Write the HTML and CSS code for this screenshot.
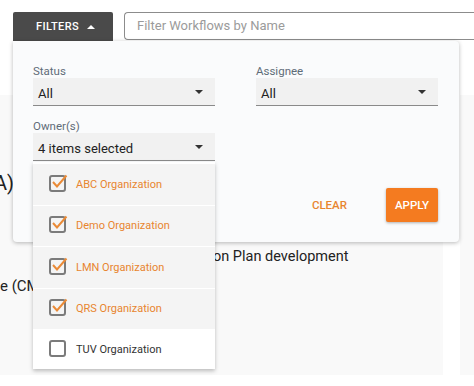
FILE: index.html
```html
<!DOCTYPE html>
<html>
<head>
<meta charset="utf-8">
<link rel="stylesheet" href="styles.css">
</head>
<body>
<div class="topbar">
  <button class="filters-btn">FILTERS<span class="up"></span></button>
  <div class="search">Filter Workflows by Name</div>
</div>

<div class="page">
  <div class="card main-card">
    <p class="bg-line big">A)</p>
    <p class="bg-line plan">on Plan development</p>
    <p class="bg-line cm">e (CM</p>
  </div>
  <div class="card side-card"></div>
</div>

<div class="filter-panel">
  <div class="grid">
    <div class="field">
      <div class="label">Status</div>
      <div class="select">All<span class="caret"></span></div>
    </div>
    <div class="field">
      <div class="label">Assignee</div>
      <div class="select">All<span class="caret"></span></div>
    </div>
    <div class="field owner">
      <div class="label">Owner(s)</div>
      <div class="select">4 items selected<span class="caret"></span></div>
    </div>
  </div>
  <div class="actions">
    <span class="clear">CLEAR</span>
    <span class="apply">APPLY</span>
  </div>
</div>

<ul class="owner-list">
  <li class="checked"><svg class="cb" viewBox="0 0 20 20"><rect x="2" y="3" width="15" height="15" rx="2" fill="none" stroke="#7b7b7b" stroke-width="2"/><polyline points="5,9 9,13.5 18.5,2.5" fill="none" stroke="#ea8a36" stroke-width="2"/></svg>ABC Organization</li>
  <li class="checked"><svg class="cb" viewBox="0 0 20 20"><rect x="2" y="3" width="15" height="15" rx="2" fill="none" stroke="#7b7b7b" stroke-width="2"/><polyline points="5,9 9,13.5 18.5,2.5" fill="none" stroke="#ea8a36" stroke-width="2"/></svg>Demo Organization</li>
  <li class="checked"><svg class="cb" viewBox="0 0 20 20"><rect x="2" y="3" width="15" height="15" rx="2" fill="none" stroke="#7b7b7b" stroke-width="2"/><polyline points="5,9 9,13.5 18.5,2.5" fill="none" stroke="#ea8a36" stroke-width="2"/></svg>LMN Organization</li>
  <li class="checked"><svg class="cb" viewBox="0 0 20 20"><rect x="2" y="3" width="15" height="15" rx="2" fill="none" stroke="#7b7b7b" stroke-width="2"/><polyline points="5,9 9,13.5 18.5,2.5" fill="none" stroke="#ea8a36" stroke-width="2"/></svg>QRS Organization</li>
  <li><svg class="cb" viewBox="0 0 20 20"><rect x="2" y="3" width="15" height="15" rx="2" fill="none" stroke="#7b7b7b" stroke-width="2"/></svg>TUV Organization</li>
</ul>
</body>
</html>
```

FILE: styles.css
```css
* { box-sizing: border-box; }
html, body {
  margin: 0;
  padding: 0;
}
body {
  width: 474px;
  height: 386px;
  overflow: hidden;
  background: #ffffff;
  font-family: Roboto, "Liberation Sans", Arial, sans-serif;
  color: #222;
  position: relative;
}

.topbar {
  display: flex;
  gap: 11px;
  padding: 12px 0 0 13px;
  height: 41px;
}
.filters-btn {
  width: 100px;
  height: 29px;
  border: none;
  border-radius: 2px 2px 0 0;
  background: #4a4a4a;
  color: #ffffff;
  font-family: Roboto, sans-serif;
  font-weight: 500;
  font-size: 11px;
  letter-spacing: 0.4px;
  padding: 0 0 0 5px;
  display: flex;
  align-items: center;
  justify-content: center;
}
.filters-btn .up {
  display: inline-block;
  width: 0;
  height: 0;
  margin-left: 8px;
  border-left: 4px solid transparent;
  border-right: 4px solid transparent;
  border-bottom: 4px solid #ffffff;
}
.search {
  flex: 1;
  height: 28px;
  border: 1px solid #8c8c8c;
  border-right: none;
  border-radius: 4px 0 0 4px;
  padding-left: 12px;
  font-size: 13px;
  line-height: 26px;
  color: #9b9b9b;
}

.page {
  display: flex;
  gap: 17px;
  margin-top: 54px;
}
.card {
  background: #f9f9f9;
  height: 280px;
}
.main-card {
  width: 443px;
  padding-top: 76px;
}
.side-card {
  flex: 1;
}
.bg-line {
  margin: 0;
  color: #222;
  white-space: nowrap;
}
.big {
  font-size: 20px;
  line-height: 24px;
  margin-left: -6px;
}
.plan {
  font-size: 14.5px;
  line-height: 18px;
  margin-top: 53px;
  padding-left: 213px;
}
.cm {
  font-size: 15px;
  line-height: 18px;
  margin-top: 11px;
}

.filter-panel {
  position: absolute;
  left: 13px;
  top: 41px;
  width: 446px;
  height: 201px;
  background: #fafbfc;
  border-radius: 0 4px 4px 4px;
  box-shadow: 0 1px 4px rgba(0, 0, 0, 0.28);
  padding: 23px 21px 0 20px;
}
.grid {
  display: grid;
  grid-template-columns: 182px 182px;
  column-gap: 41px;
  row-gap: 13px;
}
.label {
  font-size: 11.5px;
  line-height: 14px;
  color: #5f6c78;
}
.select {
  position: relative;
  height: 28px;
  background: #f1f1f1;
  border-bottom: 1px solid #8a8a8a;
  padding-left: 5px;
  font-size: 13px;
  line-height: 31px;
  color: #222;
}
.caret {
  position: absolute;
  right: 12px;
  top: 12px;
  width: 0;
  height: 0;
  border-left: 4px solid transparent;
  border-right: 4px solid transparent;
  border-top: 4px solid #333;
}
.actions {
  display: flex;
  justify-content: flex-end;
  align-items: center;
  gap: 39px;
  margin-top: 27px;
}
.clear {
  font-size: 11.5px;
  font-weight: 500;
  color: #e8852f;
}
.apply {
  width: 52px;
  height: 34px;
  background: #f47b20;
  color: #fff;
  font-size: 11.5px;
  font-weight: 500;
  border-radius: 2px;
  display: flex;
  align-items: center;
  justify-content: center;
  box-shadow: 0 1px 3px rgba(0, 0, 0, 0.3);
}

.owner-list {
  position: absolute;
  left: 33px;
  top: 162px;
  width: 182px;
  margin: 0;
  padding: 2px 0 0 0;
  list-style: none;
  background: #ffffff;
  box-shadow: 0 2px 4px rgba(0, 0, 0, 0.25);
}
.owner-list li {
  height: 41.5px;
  display: flex;
  align-items: center;
  padding-left: 15px;
  border-bottom: 1px solid #ffffff;
  font-size: 11px;
  color: #333;
}
.owner-list li.checked {
  background: #f4f4f4;
  color: #e8852f;
}
.owner-list li:last-child {
  border-bottom: none;
  height: 39px;
}
.cb {
  width: 20px;
  height: 20px;
  margin-right: 8px;
  margin-top: -3px;
}
```
